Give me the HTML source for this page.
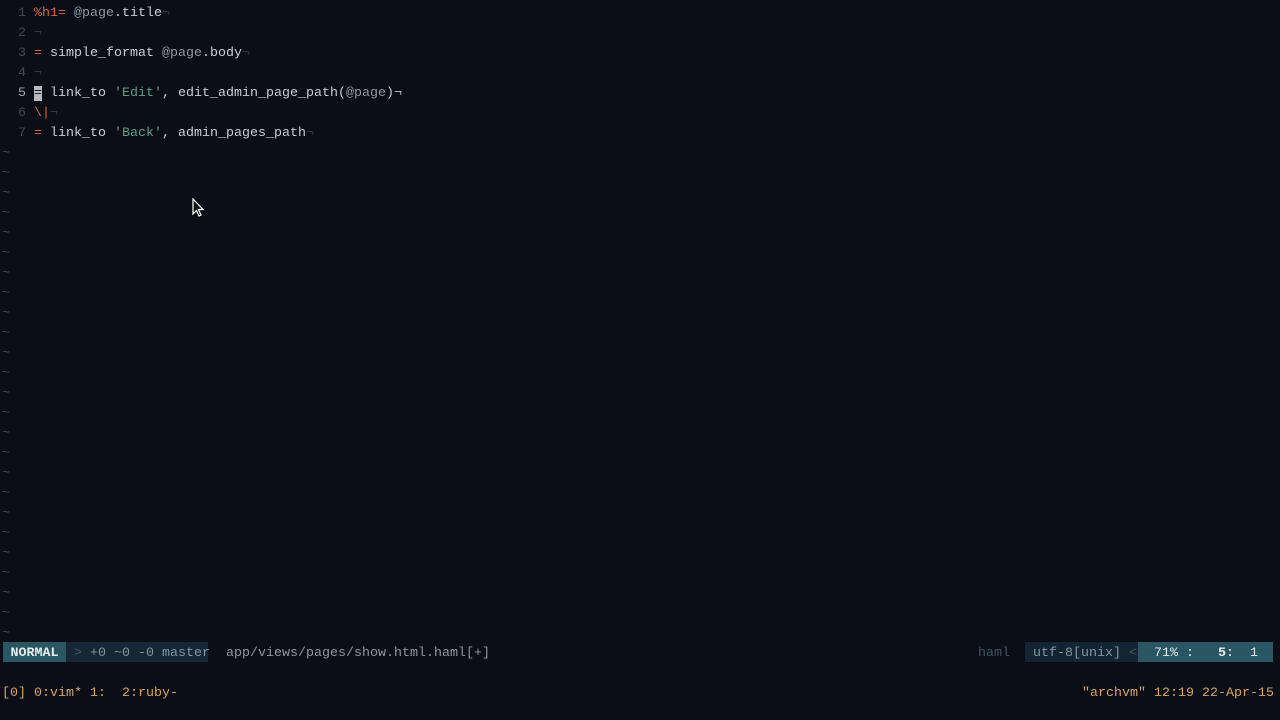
<!DOCTYPE html><html><head><style>
body{margin:0;width:1280px;height:720px;background:#0b0e17;overflow:hidden;font-family:"Liberation Mono",monospace;font-size:13.33px;color:#c9ced3;position:relative}
.r{position:absolute;left:2px;height:20px;line-height:20px;white-space:pre}
.n{color:#3c4a56}.o{color:#d0694a}.g{color:#5e9e86}.a{color:#8b99a3}.d{color:#2f3b45}
.t{color:#3c4a56}
.cur{background:#b9bcbf;color:#0b0e17}
.st{position:absolute;top:642px;height:20px;line-height:20px;white-space:pre}
.st span.in{position:relative;top:2px}
</style></head><body>
<div class="r" style="top:4px"><span class="n">  1 </span><span class="o">%h1=</span> <span class="a">@page</span>.title<span class="d">¬</span></div>
<div class="r" style="top:24px"><span class="n">  2 </span><span class="d">¬</span></div>
<div class="r" style="top:44px"><span class="n">  3 </span><span class="o">=</span> simple_format <span class="a">@page</span>.body<span class="d">¬</span></div>
<div class="r" style="top:64px"><span class="n">  4 </span><span class="d">¬</span></div>
<div class="r" style="top:84px"><span style="color:#9aa5ad">  5 </span><span class="cur">=</span> link_to <span class="g">'Edit'</span>, edit_admin_page_path(<span class="a">@page</span>)¬</div>
<div class="r" style="top:104px"><span class="n">  6 </span><span class="o">\|</span><span class="d">¬</span></div>
<div class="r" style="top:124px"><span class="n">  7 </span><span class="o">=</span> link_to <span class="g">'Back'</span>, admin_pages_path<span class="d">¬</span></div>
<div id="tl"></div>
<script>
var s='';for(var i=7;i<32;i++){s+='<div class="r t" style="top:'+(4+i*20)+'px">~</div>';}document.getElementById('tl').innerHTML=s;
</script>
<div class="st" style="left:3px;width:63px;background:#2a5663;color:#e6eef0;font-weight:bold;text-align:center"><span class="in">NORMAL</span></div>
<div class="st" style="left:66px;width:142px;background:#152733;color:#7d98a6"><span class="in"> <span style="color:#3d5866">&gt;</span> +0 ~0 -0 master</span></div>
<div class="st" style="left:226px;color:#8a98a2"><span class="in">app/views/pages/show.html.haml[+]</span></div>
<div class="st" style="left:978px;color:#3d5663"><span class="in">haml</span></div>
<div class="st" style="left:1025px;width:113px;background:#142532;color:#7d98a6"><span class="in"> utf-8[unix] <span style="color:#3d5866">&lt;</span></span></div>
<div class="st" style="left:1138px;width:135px;background:#2a5663;color:#e6eef0"><span class="in">  71% :   <b>5</b>:  1</span></div>
<div style="position:absolute;top:684px;left:2px;line-height:20px;white-space:pre;color:#d5a55a">[0] 0:vim* 1:  2:ruby-</div>
<div style="position:absolute;top:684px;right:6px;line-height:20px;white-space:pre;color:#d5a55a">"archvm" 12:19 22-Apr-15</div>
<svg style="position:absolute;left:192px;top:198px" width="14" height="22" viewBox="0 0 14 22"><path d="M1 1 L1 16 L4.5 12.5 L7 18 L9 17 L6.5 11.5 L11 11.5 Z" fill="#111" stroke="#fff" stroke-width="1.2"/></svg>
</body></html>
